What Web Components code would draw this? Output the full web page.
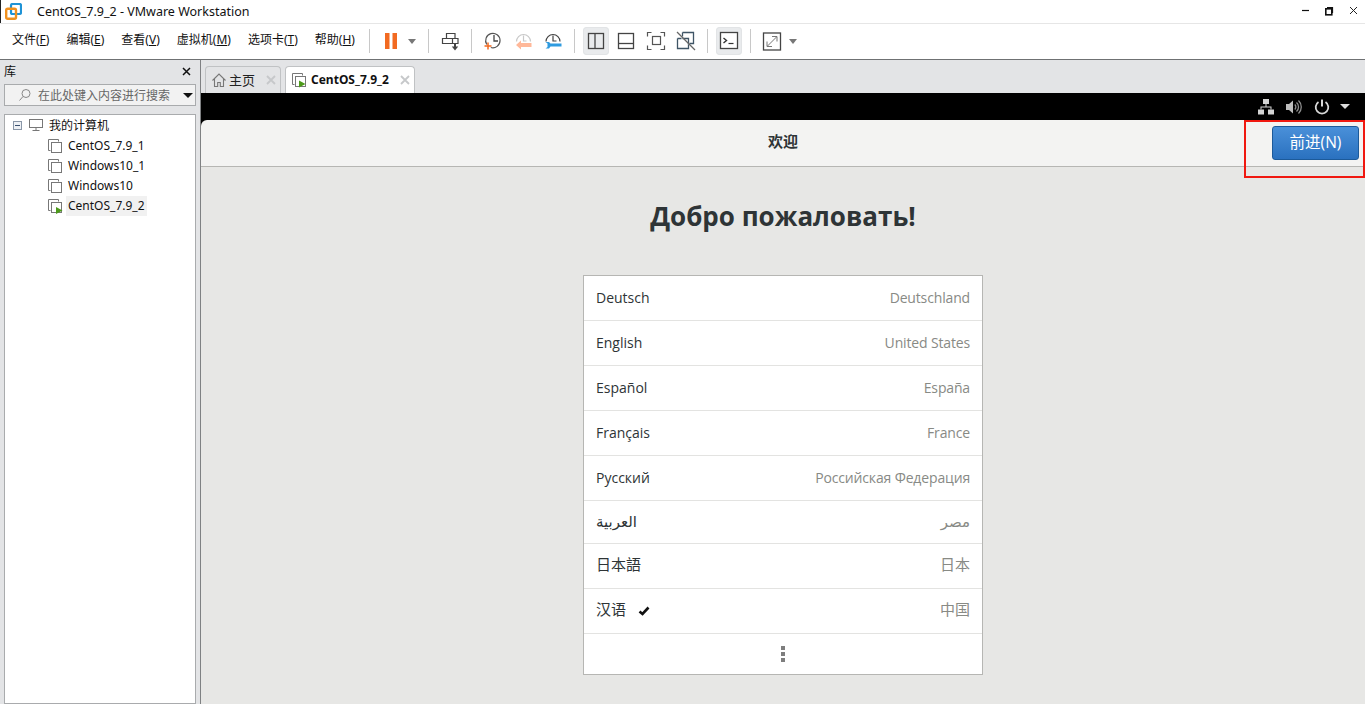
<!DOCTYPE html>
<html lang="zh">
<head>
<meta charset="utf-8">
<title>CentOS_7.9_2 - VMware Workstation</title>
<style>
  html, body { margin: 0; padding: 0; height: 100%; overflow: hidden; background: #fff; }
  body { font-family: "Noto Sans", "Noto Sans CJK SC", sans-serif; width: 1365px; height: 704px; display: flex; flex-direction: column; }
  .main { flex: 1; display: flex; min-height: 0; }
</style>
</head>
<body>
<app-titlebar>CentOS_7.9_2 - VMware Workstation</app-titlebar>
<app-toolbar></app-toolbar>
<div class="main">
  <lib-panel></lib-panel>
  <vm-area></vm-area>
</div>

<script>
// shared font stacks
const UI_FONT = '"Noto Sans", "Noto Sans CJK SC", sans-serif';
const GNOME_FONT = '"Open Sans", "Noto Sans CJK SC", "DejaVu Sans", sans-serif';

class AppTitlebar extends HTMLElement {
  constructor() {
    super();
    this.attachShadow({mode: 'open'});
    this.shadowRoot.innerHTML = `<style>
      :host { display: flex; align-items: center; height: 23px; border-bottom: 1px solid #e6e6e6; background: #fff; font: 12px ${UI_FONT}; color: #111; box-shadow: inset 1px 0 0 #222; }
      .logo { width: 17px; height: 17px; margin: 0 15px 0 5px; flex: none; }
      .title { flex: 1; font-size: 12.5px; }
      .btns { display: flex; align-items: center; }
      .btns svg { width: 24px; height: 23px; display: block; }
    </style>
    <svg class="logo" viewBox="0 0 17 17">
      <rect x="6" y="1" width="10" height="10" rx="1.500" fill="none" stroke="#1f93d6" stroke-width="2.200"/>
      <rect x="1.200" y="5.800" width="9.800" height="10" rx="1.500" fill="none" stroke="#f0901e" stroke-width="2.400"/>
    </svg>
    <span class="title"><slot></slot></span>
    <div class="btns">
      <svg viewBox="0 0 24 23"><path d="M9 10.500h7" stroke="#111" stroke-width="1.200"/></svg>
      <svg viewBox="0 0 24 23"><rect x="8.800" y="8.800" width="6" height="6" fill="none" stroke="#111" stroke-width="1.600"/><path d="M10 7.500h5.500v5.500" fill="none" stroke="#111" stroke-width="1.200"/></svg>
      <svg viewBox="0 0 24 23"><path d="M9 7l7 7m0-7l-7 7" stroke="#222" stroke-width="1" fill="none"/></svg>
    </div>`;
  }
}

// toolbar glyphs, all drawn in a 26x28 box
const TOOL_ICONS = {
  pause: '<rect x="7" y="6" width="4.500" height="16" fill="#f26a21"/><rect x="14.500" y="6" width="4.500" height="16" fill="#f26a21"/>',
  send: '<path d="M9.500 6.500H18v5H9.500zM5.500 11.500H21v5H5.500zM15.500 11.500v5" fill="none" stroke="#444" stroke-width="1.200"/><path d="M18 16.500v4" stroke="#444" stroke-width="2"/><path d="M14.800 19.500h6.400L18 23.500z" fill="#444"/>',
  snap: '<path d="M6.800 17.500a7.200 7.200 0 1 1 4 3" fill="none" stroke="#555" stroke-width="1.200"/><path d="M14 8v6h4" fill="none" stroke="#444" stroke-width="1.300"/><path d="M4.500 19h7M8 15.500v7" stroke="#f26a21" stroke-width="1.500"/>',
  revert: '<path d="M6.500 14.500a7 7 0 0 1 14 0" fill="none" stroke="#c8c8c8" stroke-width="1.200"/><path d="M13.500 8.500v5.500h3" fill="none" stroke="#c8c8c8" stroke-width="1.200"/><path d="M21.500 16H11v-2.500L6 18l5 4.500V20h10.500z" fill="#ffb899"/>',
  manage: '<path d="M6 14.500a7 7 0 0 1 14 0" fill="none" stroke="#444" stroke-width="1.200"/><path d="M13 8.500v5.500h3.500" fill="none" stroke="#444" stroke-width="1.200"/><path d="M5.500 15h3.500l1.500 1.500h11v3h-11L9 21.500H5.500l2-1.500v-3.500z" fill="#2f9be0"/>',
  library: '<rect x="5.500" y="6.500" width="15" height="15" fill="none" stroke="#444" stroke-width="1.300"/><path d="M12 6.500v15" stroke="#444" stroke-width="1.300"/>',
  thumb: '<rect x="5.500" y="6.500" width="15" height="15" fill="none" stroke="#444" stroke-width="1.300"/><path d="M5.500 16.500h15" stroke="#444" stroke-width="1.300"/>',
  full: '<path d="M4.500 9.500v-4h4M17.500 5.500h4v4M21.500 18.500v4h-4M8.500 22.500h-4v-4" fill="none" stroke="#555" stroke-width="1.200"/><rect x="9.500" y="9.500" width="8" height="8" fill="none" stroke="#555" stroke-width="1.200"/>',
  nofull: '<path d="M9.500 5.500h11v11h-4M9.500 5.500v4" fill="none" stroke="#3f5566" stroke-width="1.300"/><path d="M4.500 11.500h4M4.500 11.500v10h11v-4" fill="none" stroke="#3f5566" stroke-width="1.300"/><path d="M9.500 11.500h6v6" fill="none" stroke="#3f5566" stroke-width="1.300"/><path d="M4 5l18 18" stroke="#666" stroke-width="1.200"/>',
  term: '<rect x="4.500" y="5.500" width="17" height="16" fill="#fff" stroke="#444" stroke-width="1.300"/><path d="M7.500 11l3 2.500-3 2.500" fill="none" stroke="#333" stroke-width="1.400"/><path d="M12.500 16.500h5" stroke="#333" stroke-width="1.200"/>',
  stretch: '<rect x="4.500" y="6" width="17" height="17" fill="none" stroke="#444" stroke-width="1.300"/><path d="M8.500 19l9-9M13 9.500h5v5M8 14.500v5h5" fill="none" stroke="#777" stroke-width="1"/>'
};

class ToolIcon extends HTMLElement {
  constructor() {
    super();
    this.attachShadow({mode: 'open'});
  }
  connectedCallback() {
    this.shadowRoot.innerHTML = `<style>
      :host { display: block; width: 26px; height: 28px; box-sizing: border-box; border-radius: 4px; flex: none; }
      :host([on]) { background: #e9ebed; box-shadow: inset 0 0 0 1px #e2e4e6; }
      svg { display: block; }
    </style>
    <svg width="26" height="28" viewBox="0 0 26 28">${TOOL_ICONS[this.getAttribute('name')]}</svg>`;
  }
}

class AppToolbar extends HTMLElement {
  constructor() {
    super();
    this.attachShadow({mode: 'open'});
    const menus = [['文件','F'],['编辑','E'],['查看','V'],['虚拟机','M'],['选项卡','T'],['帮助','H']];
    this.shadowRoot.innerHTML = `<style>
      :host { display: flex; align-items: center; height: 34px; padding-bottom: 1px; background: #fff; border-bottom: 1px solid #6f7173; font: 12px ${UI_FONT}; color: #111; }
      .menus { display: flex; gap: 17px; margin-left: 12px; width: 345px; flex: none; padding-bottom: 4px; white-space: nowrap; }
      u { text-decoration: underline; text-underline-offset: 1px; }
      .sep { width: 1px; height: 24px; background: #c8c8c8; flex: none; margin: 0 8px; }
      .caret { width: 0; height: 0; border: 4px solid transparent; border-top: 5px solid #777; border-bottom: 0; flex: none; margin-left: 4px; }
      .gap { margin-left: 4px; }
    </style>
    <div class="menus">${menus.map(m => `<span>${m[0]}(<u>${m[1]}</u>)</span>`).join('')}</div>
    <span class="sep" style="margin-left:12px"></span>
    <tool-icon name="pause"></tool-icon>
    <span class="caret"></span>
    <span class="sep" style="margin-left:12px"></span>
    <tool-icon name="send"></tool-icon>
    <span class="sep"></span>
    <tool-icon name="snap"></tool-icon>
    <tool-icon class="gap" name="revert"></tool-icon>
    <tool-icon class="gap" name="manage"></tool-icon>
    <span class="sep"></span>
    <tool-icon name="library" on></tool-icon>
    <tool-icon class="gap" name="thumb"></tool-icon>
    <tool-icon class="gap" name="full"></tool-icon>
    <tool-icon class="gap" name="nofull"></tool-icon>
    <span class="sep"></span>
    <tool-icon name="term" on></tool-icon>
    <span class="sep"></span>
    <tool-icon name="stretch"></tool-icon>
    <span class="caret"></span>`;
  }
}

class TreeRow extends HTMLElement {
  constructor() {
    super();
    this.attachShadow({mode: 'open'});
  }
  connectedCallback() {
    const play = this.hasAttribute('running');
    this.shadowRoot.innerHTML = `<style>
      :host { display: flex; align-items: center; height: 20px; padding-left: 42px; }
      svg { width: 16px; height: 16px; flex: none; margin-right: 3px; }
      span { padding: 1px 2px 2px 2px; line-height: 17px; }
      :host([running]) span { background: #f1f1f1; }
    </style>
    <svg viewBox="0 0 16 16">
      <path d="M3.500 12.500h-2v-11h10v2" fill="none" stroke="#777" stroke-width="1"/>
      <rect x="4.500" y="4.500" width="10" height="10" fill="#fff" stroke="#777"/>
      ${play ? '<path d="M9 9l6.500 3.500L9 16z" fill="#4c9a1a"/>' : ''}
    </svg><span><slot></slot></span>`;
  }
}

class LibPanel extends HTMLElement {
  constructor() {
    super();
    this.attachShadow({mode: 'open'});
    this.shadowRoot.innerHTML = `<style>
      :host { display: flex; flex-direction: column; width: 201px; flex: none; box-sizing: border-box; background: #e3e4e6; padding: 0 4px; border-right: 1px solid #7f8183; font: 12px ${UI_FONT}; color: #111; }
      .head { display: flex; justify-content: space-between; align-items: center; height: 24px; padding: 0 5px 2px 0; box-sizing: border-box; flex: none; }
      .search { display: flex; align-items: center; height: 22px; box-sizing: border-box; border: 1px solid #a9abad; background: #f2f2f2; color: #666; padding: 0 2px 0 13px; flex: none; width: 192px; }
      .search svg { margin-right: 6px; flex: none; }
      .search .txt { flex: 1; white-space: nowrap; }
      .arrow { border: 5px solid transparent; border-top: 5px solid #111; border-bottom: 0; }
      .tree { flex: 1; margin-top: 8px; width: 192px; box-sizing: border-box; background: #fff; border: 1px solid #a9abad; }
      .root { display: flex; align-items: center; height: 20px; padding-left: 8px; margin-bottom: 1px; }
      .box { width: 7px; height: 7px; border: 1px solid #8a97a8; background: #eef1f5; position: relative; margin-right: 6px; }
      .box::after { content: ""; position: absolute; left: 1px; right: 1px; top: 3px; height: 1px; background: #3a5070; }
      .root svg { margin-right: 5px; }
    </style>
    <div class="head"><span>库</span><svg width="9" height="9" viewBox="0 0 9 9"><path d="M1 1l7 7m0-7l-7 7" stroke="#111" stroke-width="1.500"/></svg></div>
    <div class="search">
      <svg width="14" height="14" viewBox="0 0 14 14"><circle cx="8" cy="5.500" r="4" fill="none" stroke="#888"/><path d="M5 8.500L1.500 12.500" stroke="#888"/></svg>
      <span class="txt">在此处键入内容进行搜索</span><span class="arrow"></span>
    </div>
    <div class="tree">
      <div class="root"><span class="box"></span>
        <svg width="16" height="14" viewBox="0 0 16 14"><rect x="1.500" y="1.500" width="13" height="8" fill="none" stroke="#777"/><path d="M8 9.500v2.500M4.500 12.500h7" stroke="#777"/></svg>
        <span>我的计算机</span></div>
      <tree-row>CentOS_7.9_1</tree-row>
      <tree-row>Windows10_1</tree-row>
      <tree-row>Windows10</tree-row>
      <tree-row running>CentOS_7.9_2</tree-row>
    </div>`;
  }
}

class VmTab extends HTMLElement {
  constructor() {
    super();
    this.attachShadow({mode: 'open'});
  }
  connectedCallback() {
    const active = this.hasAttribute('active');
    const icon = active
      ? '<svg width="16" height="16" viewBox="0 0 16 16"><path d="M3.500 12.500h-2v-11h10v2" fill="none" stroke="#777"/><rect x="4.500" y="4.500" width="10" height="10" fill="#fff" stroke="#777"/><path d="M8 8.500l6.500 3.500L8 15.500z" fill="#4c9a1a"/></svg>'
      : '<svg width="16" height="16" viewBox="0 0 16 16"><path d="M1.500 8.500L8 2l6.500 6.500M3.500 7v7.500h3.200v-4h2.600v4h3.200V7" fill="none" stroke="#777" stroke-width="1.100"/></svg>';
    this.shadowRoot.innerHTML = `<style>
      :host { display: flex; align-items: center; height: 27px; box-sizing: border-box; border: 1px solid #c0c2c4; border-bottom: 0; border-radius: 4px 4px 0 0; padding: 0 4px 1px 5px; background: #e3e4e6; gap: 2px; font-size: 13px; color: #222; }
      :host([active]) { background: #fff; font-size: 12px; font-weight: 700; color: #111; gap: 4px; }
      .x { margin-left: auto; display: block; }
    </style>${icon}<span><slot></slot></span>
    <svg class="x" width="10" height="10" viewBox="0 0 10 10"><path d="M1 1l8 8m0-8l-8 8" stroke="#c6c8ca" stroke-width="1.800"/></svg>`;
  }
}

class LangRow extends HTMLElement {
  constructor() {
    super();
    this.attachShadow({mode: 'open'});
  }
  connectedCallback() {
    const h = this.getAttribute('h') || 45;
    this.shadowRoot.innerHTML = `<style>
      :host { display: flex; align-items: center; justify-content: space-between; box-sizing: border-box; height: ${h}px; padding: 0 12px 2px; border-bottom: 1px solid #e3e3e1; }
      :host([wide]) { font-size: 15px; }
      :host([cjk]) { padding-bottom: 5px; }
      .name { color: #2e3436; display: flex; align-items: center; }
      .region { color: #888a85; letter-spacing: -0.15px; }
      :host([wide]) .region { letter-spacing: 0; }
      .check { margin: 4px 0 0 12px; }
    </style>
    <span class="name">${this.getAttribute('name')}${this.hasAttribute('selected') ? '<svg class="check" width="12" height="10" viewBox="0 0 12 10"><path d="M1.500 5.500L4.500 8 10.500 1.500" fill="none" stroke="#111" stroke-width="2.600"/></svg>' : ''}</span>
    <span class="region">${this.getAttribute('region')}</span>`;
  }
}

class LangList extends HTMLElement {
  constructor() {
    super();
    this.attachShadow({mode: 'open'});
    this.shadowRoot.innerHTML = `<style>
      :host { display: block; width: 400px; box-sizing: border-box; background: #fff; border: 1px solid #b6b6b3; font: 14px ${GNOME_FONT}; }
      .more { display: flex; flex-direction: column; align-items: center; justify-content: center; gap: 2px; height: 40px; }
      .more i { width: 4px; height: 4px; background: #7e7e7e; display: block; }
    </style>
    <slot></slot>
    <div class="more"><i></i><i></i><i></i></div>`;
  }
}

class VmArea extends HTMLElement {
  constructor() {
    super();
    this.attachShadow({mode: 'open'});
    this.shadowRoot.innerHTML = `<style>
      :host { display: flex; flex-direction: column; flex: 1; min-width: 0; position: relative; font: 12px ${UI_FONT}; }
      .tabs { display: flex; align-items: flex-end; gap: 4px; height: 33px; box-sizing: border-box; background: #e3e4e6; padding-left: 4px; flex: none; }
      .screen { flex: 1; display: flex; flex-direction: column; background: #000; min-height: 0; }
      .status { display: flex; align-items: center; justify-content: flex-end; height: 27px; flex: none; padding-right: 15px; gap: 12px; }
      .status svg { display: block; }
      .caret { border: 5px solid transparent; border-top: 5px solid #ddd; border-bottom: 0; margin-left: -2px; }
      .head { display: flex; align-items: center; height: 47px; flex: none; box-sizing: border-box; background: #f3f3f2; border-bottom: 1px solid #b6b6b3; border-radius: 6px 6px 0 0; position: relative; justify-content: center; padding-bottom: 5px; font: 700 15px ${GNOME_FONT}; color: #2e3436; }
      .next { position: absolute; right: 6px; top: 6px; width: 87px; height: 34px; box-sizing: border-box; border: 1px solid #1c5a9a; border-radius: 3px; background: linear-gradient(#4a90d9, #2a71bf); color: #fff; font: 400 15.5px ${GNOME_FONT}; text-align: center; line-height: 31px; }
      .body { flex: 1; display: flex; flex-direction: column; align-items: center; background: #e7e7e5; min-height: 0; }
      h1 { font: 700 26px/1 ${GNOME_FONT}; color: #2e3436; margin: 36px 0 46px; }
      .mark { position: absolute; right: 0; top: 60px; width: 121px; height: 58px; box-sizing: border-box; border: 2px solid #f01810; pointer-events: none; }
    </style>
    <div class="tabs">
      <vm-tab style="width:76px">主页</vm-tab>
      <vm-tab active style="width:130px">CentOS_7.9_2</vm-tab>
    </div>
    <div class="screen">
      <div class="status">
        <svg width="16" height="16" viewBox="0 0 16 16" fill="#d4d4d4"><rect x="5" y="0" width="6" height="5"/><rect x="0" y="10.500" width="6" height="5"/><rect x="10" y="10.500" width="6" height="5"/><path d="M7.500 5h1v2.500h5v3h-1v-2H3.500v2h-1v-3h5z"/></svg>
        <svg width="16" height="16" viewBox="0 0 16 16"><path d="M0 5h3l4-3.500v13L3 11H0z" fill="#bdbdbd"/><path d="M8.800 5.500a3.500 3.500 0 0 1 0 5M10.500 3.500a6 6 0 0 1 0 9M12.500 1.500a9 9 0 0 1 0 13" fill="none" stroke="#8f8f8f" stroke-width="1.300"/></svg>
        <svg width="16" height="16" viewBox="0 0 16 16"><path d="M8 .500v7" stroke="#d8d8d8" stroke-width="2"/><path d="M4.500 3a6.300 6.300 0 1 0 7 0" fill="none" stroke="#d8d8d8" stroke-width="1.800"/></svg>
        <span class="caret"></span>
      </div>
      <div class="head">欢迎<div class="next">前进(N)</div></div>
      <div class="body">
        <h1>Добро пожаловать!</h1>
      </div>
    </div>
    <div class="mark"></div>`;
    const list = document.createElement('lang-list');
    const langs = [
      {name:'Deutsch', region:'Deutschland'}, {name:'English', region:'United States'},
      {name:'Español', region:'España'}, {name:'Français', region:'France'},
      {name:'Русский', region:'Российская Федерация'}, {name:'العربية', region:'مصر', h:43, wide:true},
      {name:'日本語', region:'日本', wide:true, cjk:true}, {name:'汉语', region:'中国', wide:true, cjk:true, selected:true}
    ];
    list.innerHTML = langs.map(l => `<lang-row name="${l.name}" region="${l.region}" ${l.h ? `h="${l.h}"` : ''} ${l.wide ? 'wide' : ''} ${l.cjk ? 'cjk' : ''} ${l.selected ? 'selected' : ''}></lang-row>`).join('');
    this.shadowRoot.querySelector('.body').append(list);
  }
}

customElements.define('app-titlebar', AppTitlebar);
customElements.define('tool-icon', ToolIcon);
customElements.define('app-toolbar', AppToolbar);
customElements.define('tree-row', TreeRow);
customElements.define('lib-panel', LibPanel);
customElements.define('vm-tab', VmTab);
customElements.define('lang-row', LangRow);
customElements.define('lang-list', LangList);
customElements.define('vm-area', VmArea);
</script>
</body>
</html>
